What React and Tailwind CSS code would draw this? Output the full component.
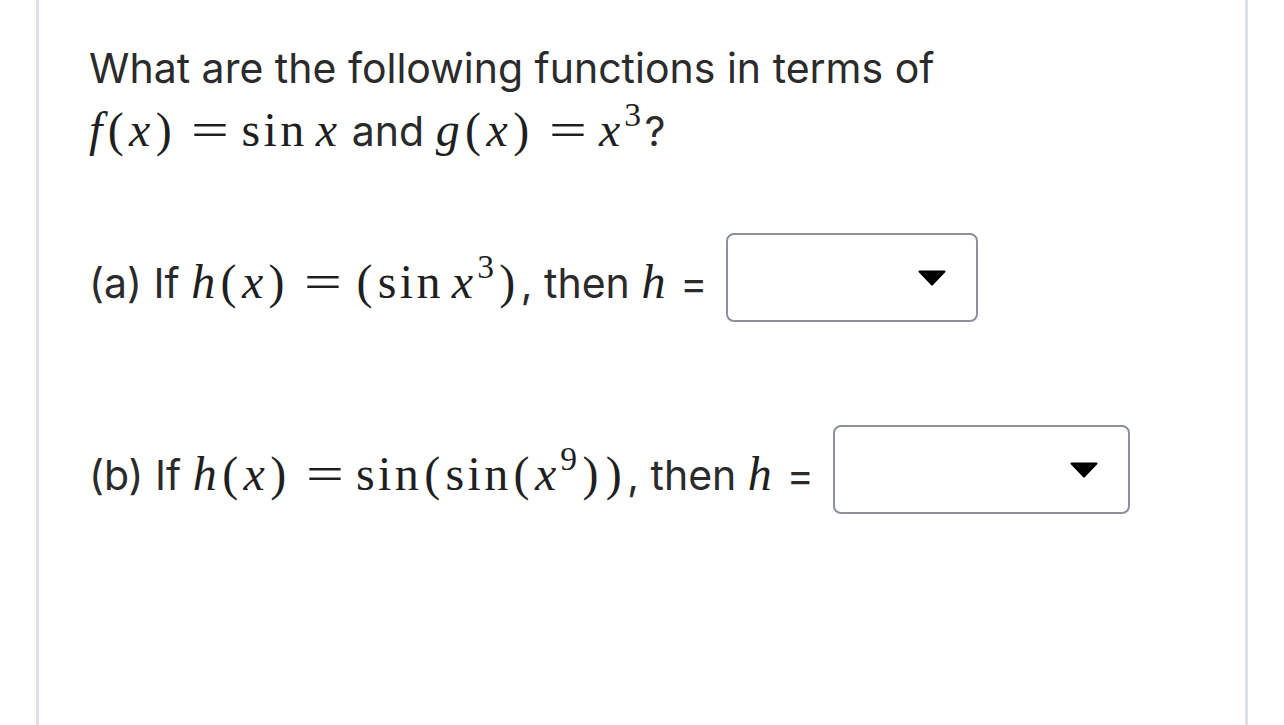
function MathSpan({ children }) {
  return (
    <span className="font-['Liberation_Serif',serif] text-[48px] leading-none tracking-[0.07em] text-[#1f1f1f] whitespace-nowrap">
      {children}
    </span>
  );
}

function V({ children, className = '' }) {
  return <span className={`italic ${className}`}>{children}</span>;
}

// parens in the TeX font carry more side room than Times
function L() {
  return <span className="mx-[2px]">(</span>;
}

function R() {
  return <span className="mx-[2px]">)</span>;
}

function Eq() {
  return <span className="inline-block ml-[20px] mr-[14px] scale-x-[1.4]">=</span>;
}

function Sup({ children }) {
  return <span className="relative -top-[0.6em] text-[0.7em] ml-[0.02em]">{children}</span>;
}

function Dropdown({ width }) {
  return (
    <div
      className="h-[89px] border-[2.5px] border-[#8c9199] rounded-[8px] bg-white flex items-center justify-end pr-[30px] shrink-0"
      style={{ width }}
    >
      <svg width="28" height="16" viewBox="0 0 28 16">
        <path d="M1.5 1.5 H26.5 L14 14.5 Z" fill="#000" stroke="#000" strokeWidth="2" strokeLinejoin="round" />
      </svg>
    </div>
  );
}

export default function App() {
  return (
    <div className="min-h-screen bg-white flex font-['Inter',sans-serif] text-[#2b2b2b]">
      <div className="ml-[36px] w-[1212px] min-h-[725px] border-x-[3px] border-[#dde1e5] pl-[50px] pt-[37px]">
        <div className="text-[41px] leading-[63px]">
          <div>What are the following functions in terms of</div>
          <div className="whitespace-nowrap">
            <MathSpan>
              <V>f</V><L /><V>x</V><R /><Eq />sin<V className="ml-[8px]">x</V>
            </MathSpan>{' '}
            and{' '}
            <MathSpan>
              <V>g</V><L /><V>x</V><R /><Eq /><V>x</V>
              <Sup>3</Sup>
            </MathSpan>
            ?
          </div>
        </div>

        <div className="mt-[70px] flex items-start text-[41px] leading-[63px]">
          <span className="whitespace-nowrap pt-[19px]">
            (a) If{' '}
            <MathSpan>
              <V>h</V><L /><V>x</V><R /><Eq /><L />sin<V className="ml-[8px]">x</V>
              <Sup>3</Sup><R />
            </MathSpan>
            , then <MathSpan><V>h</V></MathSpan> =
          </span>
          <div className="ml-[19px]">
            <Dropdown width={252} />
          </div>
        </div>

        <div className="mt-[103px] flex items-start text-[41px] leading-[63px]">
          <span className="whitespace-nowrap pt-[19px]">
            (b) If{' '}
            <MathSpan>
              <V>h</V><L /><V>x</V><R /><Eq />sin<L />sin<L /><V>x</V>
              <Sup>9</Sup><R /><R />
            </MathSpan>
            , then <MathSpan><V>h</V></MathSpan> =
          </span>
          <div className="ml-[19px]">
            <Dropdown width={297} />
          </div>
        </div>
      </div>
    </div>
  );
}
